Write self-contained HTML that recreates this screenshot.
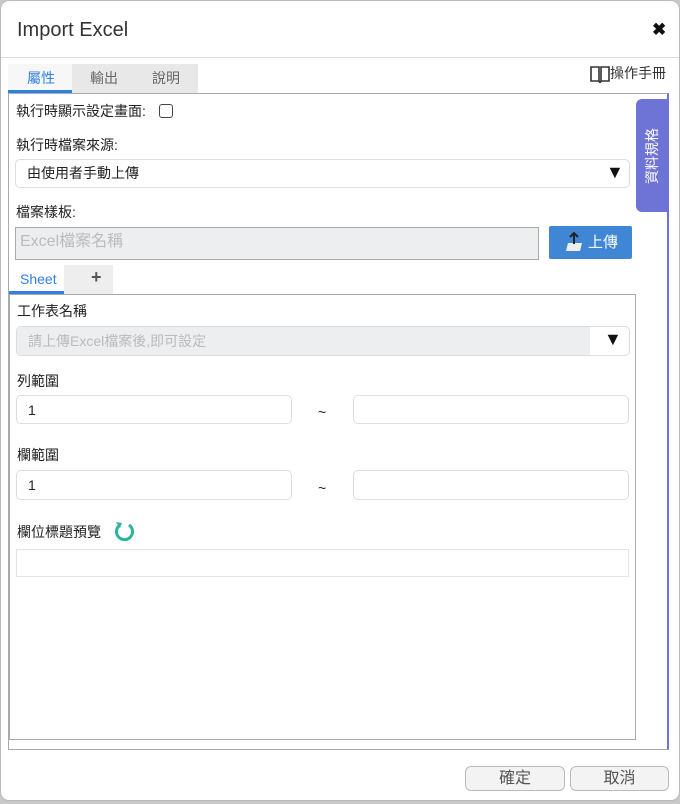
<!DOCTYPE html>
<html><head><meta charset="utf-8"><style>
*{box-sizing:border-box;margin:0;padding:0}
body{width:680px;height:804px;background:#c8c8c8;position:relative;overflow:hidden;font-family:"Liberation Sans","Noto Sans CJK TC",sans-serif;color:#222;font-size:14px}
.a{position:absolute}
.dlg{left:0;top:0;width:680px;height:801px;background:#fff;border:1px solid #bbb;border-radius:9px}
.t{white-space:nowrap;line-height:1}
.inp{border:1px solid #ddd;border-radius:5px;background:#fff}
.btn{background:#f3f3f3;border:1px solid #bbb;border-radius:6px;color:#555;font-size:16px;text-align:center;line-height:23px}
</style></head><body>
<div class="a dlg"></div>
<div class="a t" style="left:17px;top:20px;font-size:20px;color:#333">Import Excel</div>
<div class="a t" style="left:652px;top:21px;font-size:17px;font-weight:bold;color:#111">✖</div>
<div class="a" style="left:1px;top:57px;width:678px;height:1px;background:#ddd"></div>

<div class="a" style="left:8px;top:64px;width:190px;height:29px;background:#e8e8e8"></div>
<div class="a" style="left:8px;top:64px;width:64px;height:29px;background:#f7f7f7;border-bottom:3px solid #2f80e0"></div>
<div class="a t" style="left:27px;top:71px;color:#2f80e0;font-size:14px">屬性</div>
<div class="a t" style="left:90px;top:71px;color:#666;font-size:14px">輸出</div>
<div class="a t" style="left:152px;top:71px;color:#666;font-size:14px">說明</div>
<svg class="a" style="left:589px;top:65px" width="22" height="18" viewBox="0 0 22 18"><path d="M2 2h8v14H2zM12 2h8v14h-8zM10 16l1 2 1-2" fill="none" stroke="#333" stroke-width="1.6"/></svg>
<div class="a t" style="left:610px;top:66px;color:#333;font-size:14px">操作手冊</div>

<div class="a" style="left:8px;top:93px;width:661px;height:657px;border:1px solid #aaa;border-right:2px solid #6e74d6"></div>
<div class="a" style="left:636px;top:99px;width:31px;height:113px;background:#6e73d6;border-radius:6px 0 0 6px"></div>
<div class="a t" style="left:622px;top:149px;width:60px;text-align:center;color:#fff;font-size:14px;transform:rotate(-90deg)">資料規格</div>

<div class="a t" style="left:16px;top:104px">執行時顯示設定畫面:</div>
<div class="a" style="left:159px;top:104px;width:14px;height:14px;border:1px solid #444;border-radius:3px"></div>
<div class="a t" style="left:16px;top:138px">執行時檔案來源:</div>
<div class="a inp" style="left:15px;top:159px;width:615px;height:29px"></div>
<div class="a t" style="left:27px;top:166px">由使用者手動上傳</div>
<div class="a t" style="left:606px;top:163px;font-size:18px;color:#111">▼</div>
<div class="a t" style="left:16px;top:205px">檔案樣板:</div>
<div class="a" style="left:15px;top:227px;width:524px;height:33px;background:#eceeef;border:1px solid #aaa"></div>
<div class="a t" style="left:20px;top:234px;color:#bbb;font-size:16px">Excel檔案名稱</div>
<div class="a" style="left:549px;top:226px;width:83px;height:33px;background:#3f87d5;border-radius:2px"></div>
<svg class="a" style="left:565px;top:231px" width="20" height="22" viewBox="0 0 20 22"><path d="M3 12h14l-2 8H1z" fill="#eee"/><path d="M9 2v11M5 6l4-4 4 4" stroke="#222" stroke-width="2" fill="none"/></svg>
<div class="a t" style="left:588px;top:235px;color:#fff;font-size:15px">上傳</div>

<div class="a" style="left:9px;top:265px;width:55px;height:29px;border-bottom:3px solid #2f80e0"></div>
<div class="a t" style="left:20px;top:272px;color:#2f80e0;font-size:14px">Sheet</div>
<div class="a" style="left:64px;top:265px;width:49px;height:29px;background:#eee"></div>
<div class="a t" style="left:91px;top:268px;font-size:18px;font-weight:bold;color:#555">+</div>
<div class="a" style="left:9px;top:294px;width:627px;height:446px;border:1px solid #aaa"></div>

<div class="a t" style="left:17px;top:304px">工作表名稱</div>
<div class="a inp" style="left:16px;top:326px;width:614px;height:30px;overflow:hidden"><div style="width:573px;height:100%;background:#eceeef"></div></div>
<div class="a t" style="left:28px;top:334px;color:#bbb">請上傳Excel檔案後,即可設定</div>
<div class="a t" style="left:604px;top:330px;font-size:18px;color:#111">▼</div>

<div class="a t" style="left:17px;top:374px">列範圍</div>
<div class="a inp" style="left:16px;top:395px;width:276px;height:29px"></div>
<div class="a t" style="left:28px;top:403px">1</div>
<div class="a t" style="left:318px;top:405px">~</div>
<div class="a inp" style="left:353px;top:395px;width:276px;height:29px"></div>

<div class="a t" style="left:17px;top:448px">欄範圍</div>
<div class="a inp" style="left:16px;top:470px;width:276px;height:30px"></div>
<div class="a t" style="left:28px;top:478px">1</div>
<div class="a t" style="left:318px;top:481px">~</div>
<div class="a inp" style="left:353px;top:470px;width:276px;height:30px"></div>

<div class="a t" style="left:17px;top:525px">欄位標題預覽</div>
<svg class="a" style="left:112px;top:519px" width="24" height="24" viewBox="0 0 24 24"><path d="M8 6A8 8 0 1 0 17 6" fill="none" stroke="#2bb59a" stroke-width="3"/><path d="M4 3l6 1-2 5z" fill="#2bb59a"/></svg>
<div class="a" style="left:16px;top:549px;width:613px;height:28px;border:1px solid #e4e4e4"></div>

<div class="a btn" style="left:465px;top:766px;width:100px;height:25px">確定</div>
<div class="a btn" style="left:570px;top:766px;width:99px;height:25px">取消</div>
</body></html>
